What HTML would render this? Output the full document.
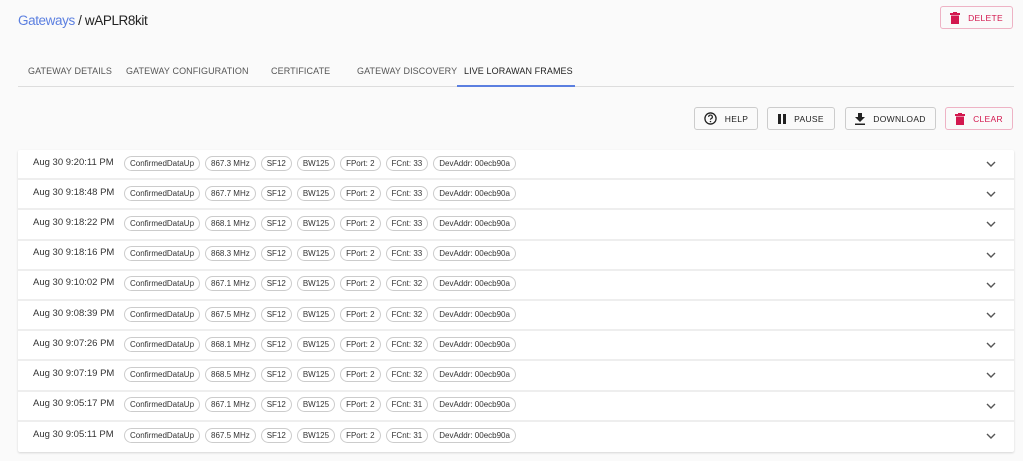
<!DOCTYPE html><html><head><style>
*{box-sizing:border-box;margin:0;padding:0}
body{width:1023px;height:461px;background:#fafafa;font-family:"Liberation Sans",sans-serif;position:relative;overflow:hidden;color:#222}
.abs{position:absolute}
.title{left:18px;top:13px;font-size:13.5px;letter-spacing:-0.4px;color:#222}
.title span{color:#5b7fe0}
.tab{top:66px;font-size:9px;color:#555;letter-spacing:.1px}
.btn{position:absolute;height:23px;border:1px solid #ccc;border-radius:3px;background:#fafafa;font-size:8.5px;letter-spacing:.3px;display:flex;align-items:center;justify-content:center;gap:8px;color:#222}
.red{border-color:#eeb3c5;color:#d3184f}
.card{left:18px;top:150px;width:996px;background:#fff;box-shadow:0 1px 2px rgba(0,0,0,.15);border-radius:2px}
.row{height:30.2px;border-bottom:2px solid #eee;display:flex;align-items:center;position:relative}
.row:last-child{border-bottom:none}
.date{width:106px;padding-left:15px;font-size:9.5px;color:#333;margin-top:-4px}
.chips{display:flex;gap:5px;margin-top:-2px}
.chip{height:15px;border:1px solid #ccc;border-radius:8px;font-size:8px;padding:0 5px;display:flex;align-items:center;color:#333}
.chev{position:absolute;right:18px;top:11px}
</style></head><body>
<div class="abs title"><span>Gateways</span> / wAPLR8kit</div>
<div class="btn red" style="left:940px;top:6px;width:73px"><svg width="10" height="12" viewBox="0 0 10 12"><rect x="0" y="1" width="10" height="2" fill="#d3184f"/><rect x="3" y="0" width="4" height="2" fill="#d3184f"/><rect x="1" y="3.5" width="8" height="8.5" fill="#d3184f"/></svg>DELETE</div>
<div class="abs tab" style="left:28px">GATEWAY DETAILS</div>
<div class="abs tab" style="left:126px">GATEWAY CONFIGURATION</div>
<div class="abs tab" style="left:271px">CERTIFICATE</div>
<div class="abs tab" style="left:357px">GATEWAY DISCOVERY</div>
<div class="abs tab" style="left:464px;color:#222">LIVE LORAWAN FRAMES</div>
<div class="abs" style="left:18px;top:86px;width:996px;height:1px;background:#ddd"></div>
<div class="abs" style="left:457px;top:85px;width:118px;height:2px;background:#5b7fe0"></div>
<div class="btn" style="left:694px;top:107px;width:64px"><svg width="13" height="13" viewBox="0 0 14 14"><circle cx="7" cy="7" r="6" fill="none" stroke="#222" stroke-width="1.4"/><path d="M5 5.3a2 2 0 1 1 2.6 1.9c-.5.2-.6.5-.6 1.1" fill="none" stroke="#222" stroke-width="1.3"/><circle cx="7" cy="10.3" r=".8" fill="#222"/></svg>HELP</div>
<div class="btn" style="left:767px;top:107px;width:68px"><svg width="8" height="10"><rect x="0" y="0" width="3" height="10" fill="#222"/><rect x="5" y="0" width="3" height="10" fill="#222"/></svg>PAUSE</div>
<div class="btn" style="left:845px;top:107px;width:91px"><svg width="10" height="12" viewBox="0 0 10 12"><path d="M3 0h4v4h3L5 9 0 4h3z" fill="#222"/><rect x="0" y="10.5" width="10" height="1.5" fill="#222"/></svg>DOWNLOAD</div>
<div class="btn red" style="left:945px;top:107px;width:68px"><svg width="10" height="12" viewBox="0 0 10 12"><rect x="0" y="1" width="10" height="2" fill="#d3184f"/><rect x="3" y="0" width="4" height="2" fill="#d3184f"/><rect x="1" y="3.5" width="8" height="8.5" fill="#d3184f"/></svg>CLEAR</div>
<div class="abs card" id="c"></div>
<script>
var d=[["9:20:11","867.3",33],["9:18:48","867.7",33],["9:18:22","868.1",33],["9:18:16","868.3",33],["9:10:02","867.1",32],["9:08:39","867.5",32],["9:07:26","868.1",32],["9:07:19","868.5",32],["9:05:17","867.1",31],["9:05:11","867.5",31]];
var h="";d.forEach(function(r){h+='<div class="row"><div class="date">Aug 30 '+r[0]+' PM</div><div class="chips"><div class="chip">ConfirmedDataUp</div><div class="chip">'+r[1]+' MHz</div><div class="chip">SF12</div><div class="chip">BW125</div><div class="chip">FPort: 2</div><div class="chip">FCnt: '+r[2]+'</div><div class="chip">DevAddr: 00ecb90a</div></div><svg class="chev" width="10" height="7" viewBox="0 0 10 7"><path d="M1 1l4 4 4-4" fill="none" stroke="#555" stroke-width="1.4"/></svg></div>'});
document.getElementById("c").innerHTML=h;
</script>
</body></html>
